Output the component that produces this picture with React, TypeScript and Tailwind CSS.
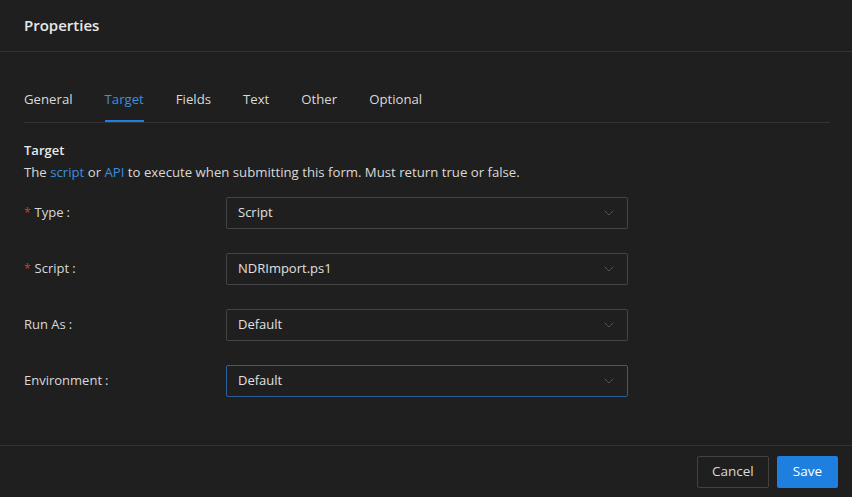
import { ChevronDown } from 'lucide-react'

const tabs = ['General', 'Target', 'Fields', 'Text', 'Other', 'Optional']

const fields = [
  { label: 'Type', value: 'Script', required: true },
  { label: 'Script', value: 'NDRImport.ps1', required: true },
  { label: 'Run As', value: 'Default' },
  { label: 'Environment', value: 'Default', focused: true },
]

export default function App() {
  return (
    <div
      className="w-[852px] h-[497px] bg-[#1f1f1f] text-[#d9d9d9] flex flex-col"
      style={{ fontFamily: '"Segoe UI", "Open Sans", "Noto Sans", sans-serif' }}
    >
      {/* Header */}
      <div className="h-[52px] shrink-0 flex items-center px-6 border-b border-[#333333]">
        <span className="text-[15px] font-semibold text-[#e8e8e8]">Properties</span>
      </div>

      {/* Body */}
      <div className="flex-1 px-6 pt-[38px]">
        <div className="flex gap-8 border-b border-[#333333] w-[806px]">
          {tabs.map((tab) => (
            <div
              key={tab}
              className={`h-[32px] flex items-start text-[13.2px] border-b-2 ${
                tab === 'Target' ? 'text-[#3b8ee0] border-[#1f7fdb]' : 'text-[#d9d9d9] border-transparent'
              }`}
            >
              {tab}
            </div>
          ))}
        </div>

        <div className="pt-[18px]">
          <div className="text-[13px] font-semibold text-[#e8e8e8] leading-[19px]">Target</div>
          <div className="text-[13.2px] leading-[19px] mt-[3px]">
            The <span className="text-[#3b8ee0]">script</span> or <span className="text-[#3b8ee0]">API</span> to execute when submitting this form. Must return true or false.
          </div>
        </div>

        <div className="flex flex-col gap-6 mt-[15px]">
          {fields.map((f) => (
            <div key={f.label} className="flex items-center">
              <div className="w-[202px] text-[13px] flex items-center">
                {f.required && <span className="text-[#d9363e] mr-[4px] text-[12px]">*</span>}
                <span>{f.label}</span>
                <span className="ml-[3px]">:</span>
              </div>
              <div
                className={`w-[402px] h-[32px] flex items-center justify-between pl-[11px] pr-[10px] rounded-[2px] border text-[13px] text-[#e0e0e0] ${
                  f.focused ? 'border-[#2a5f97]' : 'border-[#444444]'
                }`}
              >
                <span>{f.value}</span>
                <ChevronDown size={16} strokeWidth={1.2} className="text-[#5e5e5e]" />
              </div>
            </div>
          ))}
        </div>
      </div>

      {/* Footer */}
      <div className="h-[52px] shrink-0 border-t border-[#333333] flex items-center justify-end gap-2 px-[14px]">
        <button className="h-[32px] px-[14px] rounded-[2px] border border-[#424242] text-[13.5px] text-[#d9d9d9]">
          Cancel
        </button>
        <button className="h-[32px] px-[16px] rounded-[2px] bg-[#1e7fdf] text-[13.5px] text-white">
          Save
        </button>
      </div>
    </div>
  )
}
